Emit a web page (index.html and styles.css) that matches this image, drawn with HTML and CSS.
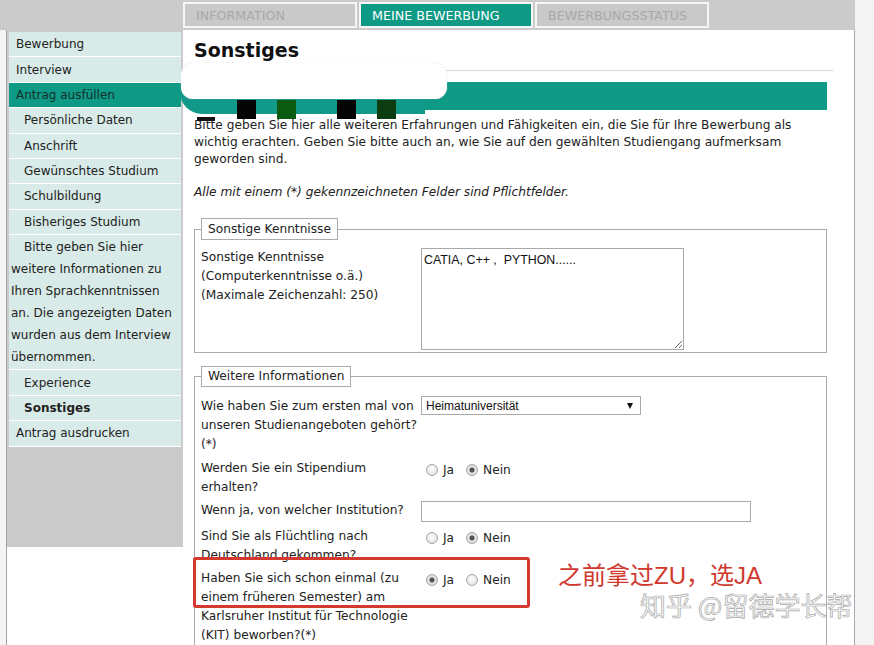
FILE: index.html
```html
<!DOCTYPE html>
<html lang="de">
<head>
    <meta charset="UTF-8">
    <title>Sonstiges</title>
    <link rel="stylesheet" href="styles.css">
</head>
<body>
<div class="page">

    <div class="topbar">
        <span class="tab">INFORMATION</span>
        <span class="tab tab-active">MEINE BEWERBUNG</span>
        <span class="tab">BEWERBUNGSSTATUS</span>
    </div>

    <div class="main">
        <aside class="sidebar">
            <ul class="menu">
                <li>Bewerbung</li>
                <li>Interview</li>
                <li class="current">Antrag ausfüllen</li>
                <li class="sub">Persönliche Daten</li>
                <li class="sub">Anschrift</li>
                <li class="sub">Gewünschtes Studium</li>
                <li class="sub">Schulbildung</li>
                <li class="sub">Bisheriges Studium</li>
                <li class="sub">Bitte geben Sie hier weitere Informationen zu Ihren Sprachkenntnissen an. Die angezeigten Daten wurden aus dem Interview übernommen.</li>
                <li class="sub">Experience</li>
                <li class="sub active">Sonstiges</li>
                <li>Antrag ausdrucken</li>
            </ul>
        </aside>

        <section class="content">
            <h1>Sonstiges</h1>
            <div class="bar"></div>

            <p class="intro">Bitte geben Sie hier alle weiteren Erfahrungen und Fähigkeiten ein, die Sie für Ihre Bewerbung als wichtig erachten. Geben Sie bitte auch an, wie Sie auf den gewählten Studiengang aufmerksam geworden sind.</p>
            <p class="note">Alle mit einem (*) gekennzeichneten Felder sind Pflichtfelder.</p>

            <fieldset class="group">
                <legend>Sonstige Kenntnisse</legend>
                <div class="rows">
                    <label class="field-label">Sonstige Kenntnisse (Computerkenntnisse o.ä.) (Maximale Zeichenzahl: 250)</label>
                    <div class="field">
                        <textarea class="textbox">CATIA, C++ ,  PYTHON......</textarea>
                    </div>
                </div>
            </fieldset>

            <fieldset class="group group-second">
                <legend>Weitere Informationen</legend>
                <div class="rows">
                    <label class="field-label">Wie haben Sie zum ersten mal von unseren Studienangeboten gehört? (*)</label>
                    <div class="field">
                        <div class="select"><span>Heimatuniversität</span><span class="arrow"></span></div>
                    </div>

                    <label class="field-label">Werden Sie ein Stipendium erhalten?</label>
                    <div class="field radios">
                        <input type="radio" name="stip"><span class="opt">Ja</span>
                        <input type="radio" name="stip" checked><span class="opt">Nein</span>
                    </div>

                    <label class="field-label">Wenn ja, von welcher Institution?</label>
                    <div class="field">
                        <input type="text" class="textline">
                    </div>

                    <label class="field-label">Sind Sie als Flüchtling nach Deutschland gekommen?</label>
                    <div class="field radios">
                        <input type="radio" name="fl"><span class="opt">Ja</span>
                        <input type="radio" name="fl" checked><span class="opt">Nein</span>
                    </div>

                    <label class="field-label">Haben Sie sich schon einmal (zu einem früheren Semester) am Karlsruher Institut für Technologie (KIT) beworben?(*)</label>
                    <div class="field radios">
                        <input type="radio" name="kit" checked><span class="opt">Ja</span>
                        <input type="radio" name="kit"><span class="opt">Nein</span>
                    </div>
                </div>
            </fieldset>
        </section>
    </div>

    <!-- Abdeckung über dem Namen -->
    <div class="censor-strip">
        <span class="blk blk-1"></span>
        <span class="blk blk-2"></span>
        <span class="blk blk-3"></span>
        <span class="blk blk-4"></span>
    </div>
    <span class="censor-dot"></span>
    <div class="censor-white"></div>

    <div class="mark-box"></div>
    <div class="mark-text">之前拿过ZU，选JA</div>
    <div class="watermark">知乎 @留德学长帮</div>
</div>
</body>
</html>
```

FILE: styles.css
```css
body {
    margin: 0;
    background: #f4f4f4;
    font-family: "DejaVu Sans", Verdana, sans-serif;
    font-size: 12.2px;
    color: #222;
    overflow: hidden;
}

.page {
    position: relative;
    width: 855px;
}

/* Reiter oben */
.topbar {
    display: flex;
    gap: 2px;
    height: 30px;
    box-sizing: border-box;
    padding: 2px 0 0 183px;
    background: #cbcbcb;
}

.tab {
    width: 174px;
    height: 26px;
    box-sizing: border-box;
    border: 2px solid #f6f6f6;
    background: #c9c9c9;
    color: #a8a8a8;
    padding: 2px 0 0 11px;
    font-size: 12.7px;
    line-height: 20px;
}

.tab-active {
    background: #0f9a86;
    color: #fff;
}

.main {
    display: flex;
    margin-left: 6px;
    border-left: 1px solid #a2a2a2;
    background: #fff;
    min-height: 640px;
}

/* Menü links */
.sidebar {
    flex: none;
    width: 176px;
    height: 517px;
    box-sizing: border-box;
    padding: 2px;
    background: #cbcbcb;
}

.menu {
    list-style: none;
    margin: 0;
    padding: 0;
    background: #d8ebe8;
    font-size: 12px;
}

.menu li {
    line-height: 22px;
    padding: 1.2px 0 1.2px 7px;
    border-bottom: 1px solid #fff;
}

.menu .sub {
    padding-left: 2px;
    text-indent: 13px;
}

.menu .current {
    background: #0f9a86;
    color: #14302c;
}

.menu .active {
    font-weight: bold;
}

/* Inhalt */
.content {
    flex: 1;
    padding: 0 21px 0 11px;
    border-right: 1px solid #a8a8a8;
}

h1 {
    margin: 8px 0 0;
    padding-bottom: 8px;
    border-bottom: 1px solid #d6d6d6;
    font-size: 19px;
    line-height: 24px;
    color: #111;
}

.bar {
    height: 28px;
    margin: 11px 6px 0 0;
    background: #0f9a86;
}

.intro {
    margin: 6.5px 6px 0 0;
    line-height: 17px;
}

.note {
    margin: 16px 0 0;
    line-height: 17px;
    font-style: italic;
}

.group {
    margin: 17.5px 6px 0 0;
    padding: 8px 6px 2px;
    border: 1px solid #ababab;
}

.group-second {
    margin-top: 13px;
    padding-top: 10px;
}

.group legend {
    padding: 3px 6px;
    border: 1px solid #ababab;
    line-height: 14px;
}

.group-second legend {
    padding: 2px 6px 3px;
}

.rows {
    display: grid;
    grid-template-columns: 220px 1fr;
    row-gap: 4px;
}

.group-second .rows {
    row-gap: 4.5px;
}

.field-label {
    padding-right: 2px;
    line-height: 19px;
}

.textbox {
    display: block;
    width: 263px;
    height: 102px;
    box-sizing: border-box;
    margin: 0;
    padding: 4px 2px;
    border: 1px solid #a9a9a9;
    font-family: "Liberation Sans", Arial, sans-serif;
    font-size: 12.4px;
    color: #111;
}

.select {
    display: flex;
    align-items: center;
    justify-content: space-between;
    width: 220px;
    height: 19px;
    box-sizing: border-box;
    margin-top: -1px;
    padding: 0 7px 0 4px;
    border: 1px solid #a9a9a9;
    font-family: "Liberation Sans", Arial, sans-serif;
    font-size: 12px;
    color: #111;
}

.arrow {
    width: 0;
    height: 0;
    border-left: 3.5px solid transparent;
    border-right: 3.5px solid transparent;
    border-top: 6px solid #111;
}

.textline {
    display: block;
    width: 330px;
    height: 21px;
    box-sizing: border-box;
    margin: 0;
    border: 1px solid #a9a9a9;
}

.radios {
    display: flex;
    align-items: center;
    align-self: start;
    padding: 4px 0 0 5px;
}

.radios input {
    appearance: none;
    width: 12px;
    height: 12px;
    margin: 0 5px 0 0;
    border: 1px solid #a5a5a5;
    border-radius: 50%;
    background: radial-gradient(circle at 45% 40%, #fff, #d9d9d9);
}

.radios input:checked {
    background: radial-gradient(circle, #555 0 2.2px, #e9e9e9 3px, #cfcfcf);
}

.opt {
    margin-right: 12px;
    line-height: 14px;
}

/* Markierungen über dem Bild */
.censor-white {
    position: absolute;
    left: 181px;
    top: 63px;
    width: 266px;
    height: 36px;
    border-radius: 12px;
    background: #fff;
    box-shadow: 0 0 1px #ccc;
}

.censor-strip {
    position: absolute;
    left: 180px;
    top: 88px;
    width: 245px;
    height: 26px;
    border-bottom-left-radius: 22px;
    background: #11998a;
}

.blk {
    position: absolute;
    top: 12px;
    width: 19px;
    height: 19px;
}

.blk-1 { left: 57px; background: #050505; }
.blk-2 { left: 97px; background: #0b5c12; }
.blk-3 { left: 157px; background: #050505; }
.blk-4 { left: 197px; background: #0c3c10; }

.censor-dot {
    position: absolute;
    left: 197px;
    top: 117px;
    width: 18px;
    height: 4px;
    background: #111;
}

.mark-box {
    position: absolute;
    left: 193px;
    top: 557px;
    width: 337px;
    height: 51px;
    box-sizing: border-box;
    border: 3px solid #d3392f;
    border-radius: 3px;
}

.mark-text {
    position: absolute;
    left: 558px;
    top: 561px;
    font-family: "Liberation Sans", "Noto Sans CJK SC", sans-serif;
    font-size: 24px;
    line-height: 30px;
    color: #d0382d;
}

.watermark {
    position: absolute;
    left: 640px;
    top: 588px;
    font-family: "Noto Sans CJK SC", sans-serif;
    font-size: 26px;
    line-height: 34px;
    color: #fafafa;
    -webkit-text-stroke: 0.7px #a8a8a8;
}
```
